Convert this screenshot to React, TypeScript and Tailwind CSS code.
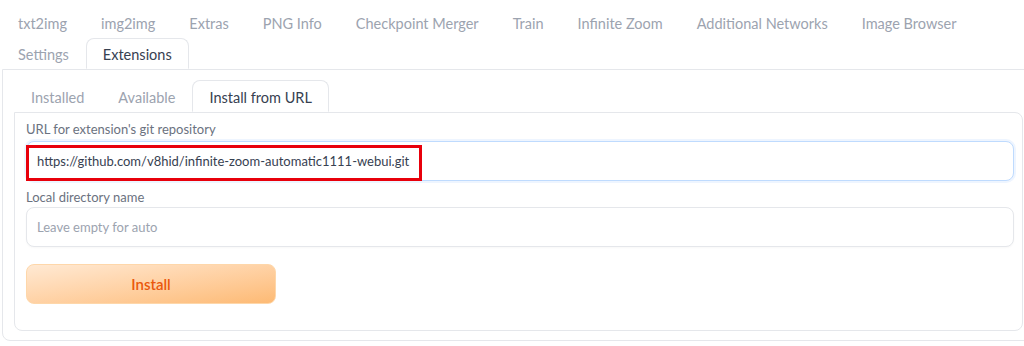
const topRow1 = ["txt2img", "img2img", "Extras", "PNG Info", "Checkpoint Merger", "Train", "Infinite Zoom", "Additional Networks", "Image Browser"];

function Tab({ label, active, tall }: { label: string; active?: boolean; tall?: boolean }) {
  const h = tall ? "h-[32px]" : "h-[31px]";
  return (
    <button
      className={
        active
          ? `relative -mb-px ${h} px-4 pt-[4px] border border-[#e5e7eb] border-b-white bg-white rounded-t-lg text-[#374151] z-10`
          : `${h} px-4 pt-[4px] border border-transparent text-[#9ca3af]`
      }
    >
      {label}
    </button>
  );
}

export default function App() {
  return (
    <div
      className="w-[1024px] h-[346px] overflow-hidden bg-white text-[14.5px] leading-none"
      style={{ fontFamily: "'Source Sans Pro', Lato, 'Noto Sans', sans-serif" }}
    >
      <div className="pt-[7px] pl-[1px]">
        <div className="flex">
          {topRow1.map((t) => (
            <Tab key={t} label={t} />
          ))}
        </div>
        <div className="flex">
          <Tab label="Settings" />
          <Tab label="Extensions" active />
        </div>
      </div>

      <div className="ml-[2px] w-[1030px] border border-[#e5e7eb] rounded-b-lg px-[11px] pt-[10px] pb-[9px]">
        <div className="flex">
          <Tab label="Installed" tall />
          <Tab label="Available" tall />
          <Tab label="Install from URL" active tall />
        </div>
        <div className="w-[1009px] border border-[#e5e7eb] rounded-b-lg rounded-tr-lg px-[11px] pt-[10px] pb-[26px]">
          <label className="block text-[13px] text-[#6b7280] mb-[5px]">URL for extension's git repository</label>
          <div className="w-[988px] h-[40px] rounded-lg border border-[#bfdbfe] ring-2 ring-[#eef5ff] bg-white flex items-center relative">
            <span className="pl-[10px] text-[13px] text-[#374151]">https://github.com/v8hid/infinite-zoom-automatic1111-webui.git</span>
            <div className="absolute left-[-1px] top-[3px] w-[396px] h-[36px] border-[3px] border-[#e8000b]" />
          </div>
          <label className="block text-[13px] text-[#6b7280] mt-[10px] mb-[3px]">Local directory name</label>
          <div className="w-[988px] h-[40px] rounded-lg border border-[#e5e7eb] shadow-[0_1px_2px_rgba(0,0,0,0.03)] bg-white flex items-center">
            <span className="pl-[10px] text-[13px] text-[#9ca3af]">Leave empty for auto</span>
          </div>
          <button className="mt-[17px] w-[250px] h-[40px] rounded-lg border border-[#fed7aa] bg-gradient-to-br from-[#ffe9d3] to-[#fdba74] text-[#ea580c] font-semibold text-[15px]">
            Install
          </button>
        </div>
      </div>
    </div>
  );
}
